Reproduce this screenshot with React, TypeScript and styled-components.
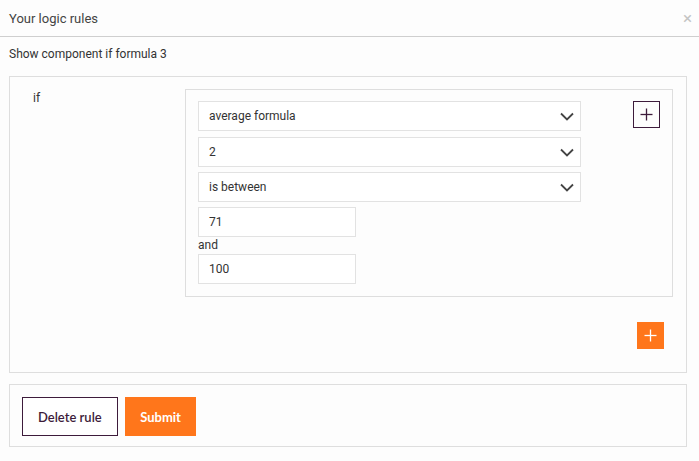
import React from 'react';
import styled, { createGlobalStyle } from 'styled-components';

const GlobalStyle = createGlobalStyle`
  html, body {
    margin: 0;
    padding: 0;
    background: #fdfdfd;
  }
  body {
    font-family: Roboto, 'Liberation Sans', Arial, sans-serif;
    color: #333;
  }
`;

const Modal = styled.div`
  width: 699px;
  min-height: 461px;
  background: #fdfdfd;
`;

const Header = styled.div`
  height: 37px;
  border-bottom: 1px solid #cfcfcf;
  display: flex;
  align-items: center;
  justify-content: space-between;
  padding: 0 9px;
  box-sizing: border-box;
`;

const Title = styled.h3`
  margin: 0;
  font-size: 13px;
  font-weight: 400;
  color: #444;
  padding-top: 1px;
`;

const Close = styled.span`
  font-size: 17px;
  line-height: 1;
  color: #c4c4c4;
  margin-top: 1px;
  margin-right: -2px;
`;

const Body = styled.div`
  padding: 0 12px 0 9px;
`;

const Subtitle = styled.p`
  margin: 9px 0 14px;
  font-size: 12px;
  line-height: 16px;
  color: #333;
`;

const Box = styled.div`
  border: 1px solid #dedede;
  box-sizing: border-box;
`;

const RuleBox = styled(Box)`
  padding: 12px 13px 23px 12px;
`;

const RuleGrid = styled.div`
  display: grid;
  grid-template-columns: 163px 1fr;
`;

const IfLabel = styled.span`
  font-size: 12px;
  line-height: 16px;
  padding: 1px 0 0 11px;
`;

const Condition = styled(Box)`
  padding: 11px 12px 12px 12px;
  display: flex;
  align-items: flex-start;
  justify-content: space-between;
`;

const Fields = styled.div`
  display: flex;
  flex-direction: column;
  width: 383px;
`;

const Field = styled.div<{ $narrow?: boolean; $gap?: number }>`
  height: 30px;
  width: ${p => (p.$narrow ? '158px' : '100%')};
  margin-bottom: ${p => p.$gap ?? 5}px;
  border: 1px solid #e2e2e2;
  background: #fff;
  box-sizing: border-box;
  display: flex;
  align-items: center;
  justify-content: space-between;
  padding: 0 6px 0 10px;
  font-size: 12px;
  color: #333;
`;

const AndLabel = styled.span`
  font-size: 12px;
  line-height: 17px;
  height: 17px;
  color: #333;
  margin-top: -5px;
`;

const IconButton = styled.button<{ $filled?: boolean }>`
  width: 27px;
  height: 27px;
  padding: 0;
  display: flex;
  align-items: center;
  justify-content: center;
  box-sizing: border-box;
  border: 1px solid ${p => (p.$filled ? '#ff761b' : '#3d1b3b')};
  background: ${p => (p.$filled ? '#ff761b' : 'transparent')};
  color: ${p => (p.$filled ? '#fff' : '#3d1b3b')};
  cursor: pointer;
`;

const AddRow = styled.div`
  display: flex;
  justify-content: flex-end;
  margin-top: 25px;
  padding-right: 9px;
`;

const Footer = styled(Box)`
  margin-top: 11px;
  padding: 12px 12px 10px;
  display: flex;
  gap: 7px;
`;

const ActionButton = styled.button<{ $primary?: boolean }>`
  height: 39px;
  padding: 0 ${p => (p.$primary ? 14.5 : 15)}px;
  box-sizing: border-box;
  font-family: Lato, 'Noto Sans', sans-serif;
  font-size: 13px;
  font-weight: ${p => (p.$primary ? 700 : 600)};
  border: 1px solid ${p => (p.$primary ? '#ff761b' : '#3d1b3b')};
  background: ${p => (p.$primary ? '#ff761b' : '#fff')};
  color: ${p => (p.$primary ? '#fff' : '#3d1b3b')};
  cursor: pointer;
`;

const Chevron = () => (
  <svg width="14" height="9" viewBox="0 0 14 9" fill="none">
    <polyline points="1,1.5 7,7.5 13,1.5" stroke="#444" strokeWidth="1.8" />
  </svg>
);

const Plus = () => (
  <svg width="13" height="13" viewBox="0 0 13 13" fill="none">
    <line x1="6.5" y1="0.5" x2="6.5" y2="12.5" stroke="currentColor" strokeWidth="1.3" />
    <line x1="0.5" y1="6.5" x2="12.5" y2="6.5" stroke="currentColor" strokeWidth="1.3" />
  </svg>
);

export default function App() {
  return (
    <Modal>
      <GlobalStyle />
      <Header>
        <Title>Your logic rules</Title>
        <Close>×</Close>
      </Header>
      <Body>
        <Subtitle>Show component if formula 3</Subtitle>
        <RuleBox>
          <RuleGrid>
            <IfLabel>if</IfLabel>
            <Condition>
              <Fields>
                <Field $gap={6}>
                  average formula
                  <Chevron />
                </Field>
                <Field>
                  2
                  <Chevron />
                </Field>
                <Field>
                  is between
                  <Chevron />
                </Field>
                <Field $narrow>71</Field>
                <AndLabel>and</AndLabel>
                <Field $narrow $gap={0}>100</Field>
              </Fields>
              <IconButton>
                <Plus />
              </IconButton>
            </Condition>
          </RuleGrid>
          <AddRow>
            <IconButton $filled>
              <Plus />
            </IconButton>
          </AddRow>
        </RuleBox>
        <Footer>
          <ActionButton>Delete rule</ActionButton>
          <ActionButton $primary>Submit</ActionButton>
        </Footer>
      </Body>
    </Modal>
  );
}
